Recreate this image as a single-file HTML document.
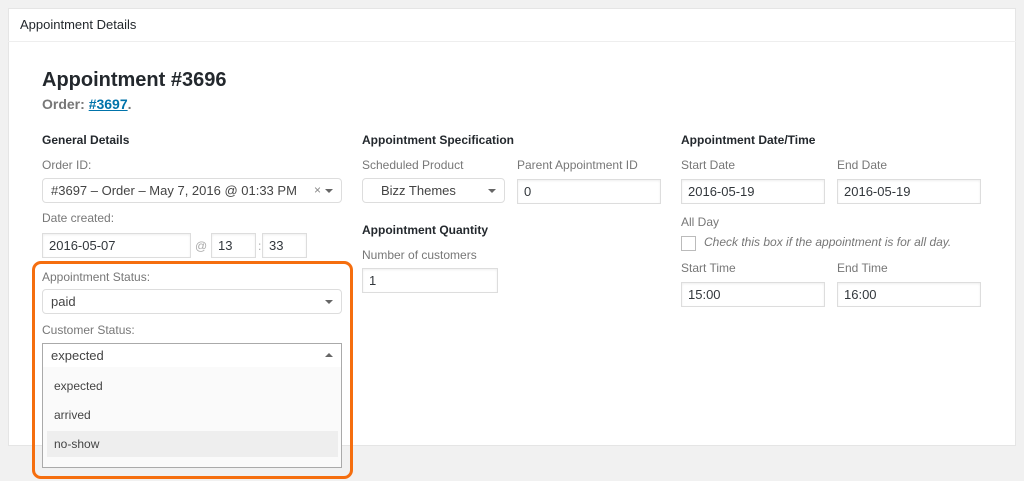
<!DOCTYPE html><html><head><style>
body{margin:0;width:1024px;height:481px;background:#f1f1f1;font-family:"Liberation Sans",sans-serif;position:relative;overflow:hidden}
.a{position:absolute;white-space:nowrap}
.panel{position:absolute;left:8px;top:8px;width:1006px;height:436px;background:#fff;border:1px solid #e5e5e5}
.l{position:absolute;font-size:12px;color:#777;line-height:14px;white-space:nowrap}
.h{position:absolute;font-size:12px;color:#23282d;font-weight:bold;line-height:14px;white-space:nowrap}
.in{position:absolute;box-sizing:border-box;border:1px solid #ddd;background:#fff;font-size:13px;color:#32373c;padding-left:6px;display:flex;align-items:center;box-shadow:inset 0 1px 2px rgba(0,0,0,.07)}
.sel{position:absolute;box-sizing:border-box;border:1px solid #ddd;border-radius:4px;background:#fff;font-size:13px;color:#444;padding-left:8px;display:flex;align-items:center}
.dn{position:absolute;right:8px;top:10px;width:0;height:0;border-left:4px solid transparent;border-right:4px solid transparent;border-top:4px solid #666}
.up{position:absolute;right:8px;top:9px;width:0;height:0;border-left:4px solid transparent;border-right:4px solid transparent;border-bottom:4px solid #666}
</style></head><body>
<div class="panel"></div>
<div class="a" style="left:8px;top:41px;width:1008px;height:1px;background:#eee"></div>
<div class="a" style="left:20px;top:17px;font-size:13px;color:#23282d">Appointment Details</div>
<div class="a" style="left:42px;top:69px;font-size:20px;font-weight:bold;color:#23282d">Appointment #3696</div>
<div class="a" style="left:42px;top:96px;font-size:14px;font-weight:bold;color:#777">Order: <span style="color:#0073aa;text-decoration:underline">#3697</span>.</div>

<div class="h" style="left:42px;top:133px">General Details</div>
<div class="l" style="left:42px;top:158px">Order ID:</div>
<div class="sel" style="left:42px;top:178px;width:300px;height:25px">#3697 – Order – May 7, 2016 @ 01:33 PM<span class="a" style="right:20px;top:4px;color:#888;font-size:12px">×</span><div class="dn"></div></div>
<div class="l" style="left:42px;top:211px">Date created:</div>
<div class="in" style="left:42px;top:233px;width:149px;height:25px">2016-05-07</div>
<div class="l" style="left:195px;top:239px;color:#aaa">@</div>
<div class="in" style="left:211px;top:233px;width:45px;height:25px">13</div>
<div class="l" style="left:258px;top:239px;color:#aaa">:</div>
<div class="in" style="left:262px;top:233px;width:45px;height:25px">33</div>

<div class="a" style="left:32px;top:261px;width:315px;height:212px;border:3px solid #f56e0f;border-radius:9px"></div>
<div class="l" style="left:42px;top:270px">Appointment Status:</div>
<div class="sel" style="left:42px;top:289px;width:300px;height:25px">paid<div class="dn"></div></div>
<div class="l" style="left:42px;top:323px">Customer Status:</div>
<div class="a" style="left:42px;top:343px;width:300px;height:125px;box-sizing:border-box;border:1px solid #aaa;background:#fff"></div>
<div class="sel" style="left:43px;top:344px;width:298px;height:23px;border:none;border-radius:0">expected<div class="up"></div></div>
<div class="a" style="left:43px;top:367px;width:298px;height:100px;background:#fafafa"></div>
<div class="a" style="left:54px;top:379px;font-size:12px;color:#444">expected</div>
<div class="a" style="left:54px;top:408px;font-size:12px;color:#444">arrived</div>
<div class="a" style="left:47px;top:431px;width:291px;height:26px;background:#eee"></div>
<div class="a" style="left:54px;top:437px;font-size:12px;color:#444">no-show</div>

<div class="h" style="left:362px;top:133px">Appointment Specification</div>
<div class="l" style="left:362px;top:158px">Scheduled Product</div>
<div class="sel" style="left:362px;top:178px;width:143px;height:25px;padding-left:18px">Bizz Themes<div class="dn"></div></div>
<div class="l" style="left:517px;top:158px">Parent Appointment ID</div>
<div class="in" style="left:517px;top:179px;width:144px;height:25px">0</div>
<div class="h" style="left:362px;top:223px">Appointment Quantity</div>
<div class="l" style="left:362px;top:248px">Number of customers</div>
<div class="in" style="left:362px;top:268px;width:136px;height:25px">1</div>

<div class="h" style="left:681px;top:133px">Appointment Date/Time</div>
<div class="l" style="left:681px;top:158px">Start Date</div>
<div class="l" style="left:837px;top:158px">End Date</div>
<div class="in" style="left:681px;top:179px;width:144px;height:25px">2016-05-19</div>
<div class="in" style="left:837px;top:179px;width:144px;height:25px">2016-05-19</div>
<div class="l" style="left:681px;top:215px">All Day</div>
<div class="a" style="left:681px;top:236px;width:15px;height:15px;box-sizing:border-box;border:1px solid #bbb;background:#fff"></div>
<div class="l" style="left:704px;top:235px;font-style:italic">Check this box if the appointment is for all day.</div>
<div class="l" style="left:681px;top:261px">Start Time</div>
<div class="l" style="left:837px;top:261px">End Time</div>
<div class="in" style="left:681px;top:282px;width:144px;height:25px">15:00</div>
<div class="in" style="left:837px;top:282px;width:144px;height:25px">16:00</div>
</body></html>
